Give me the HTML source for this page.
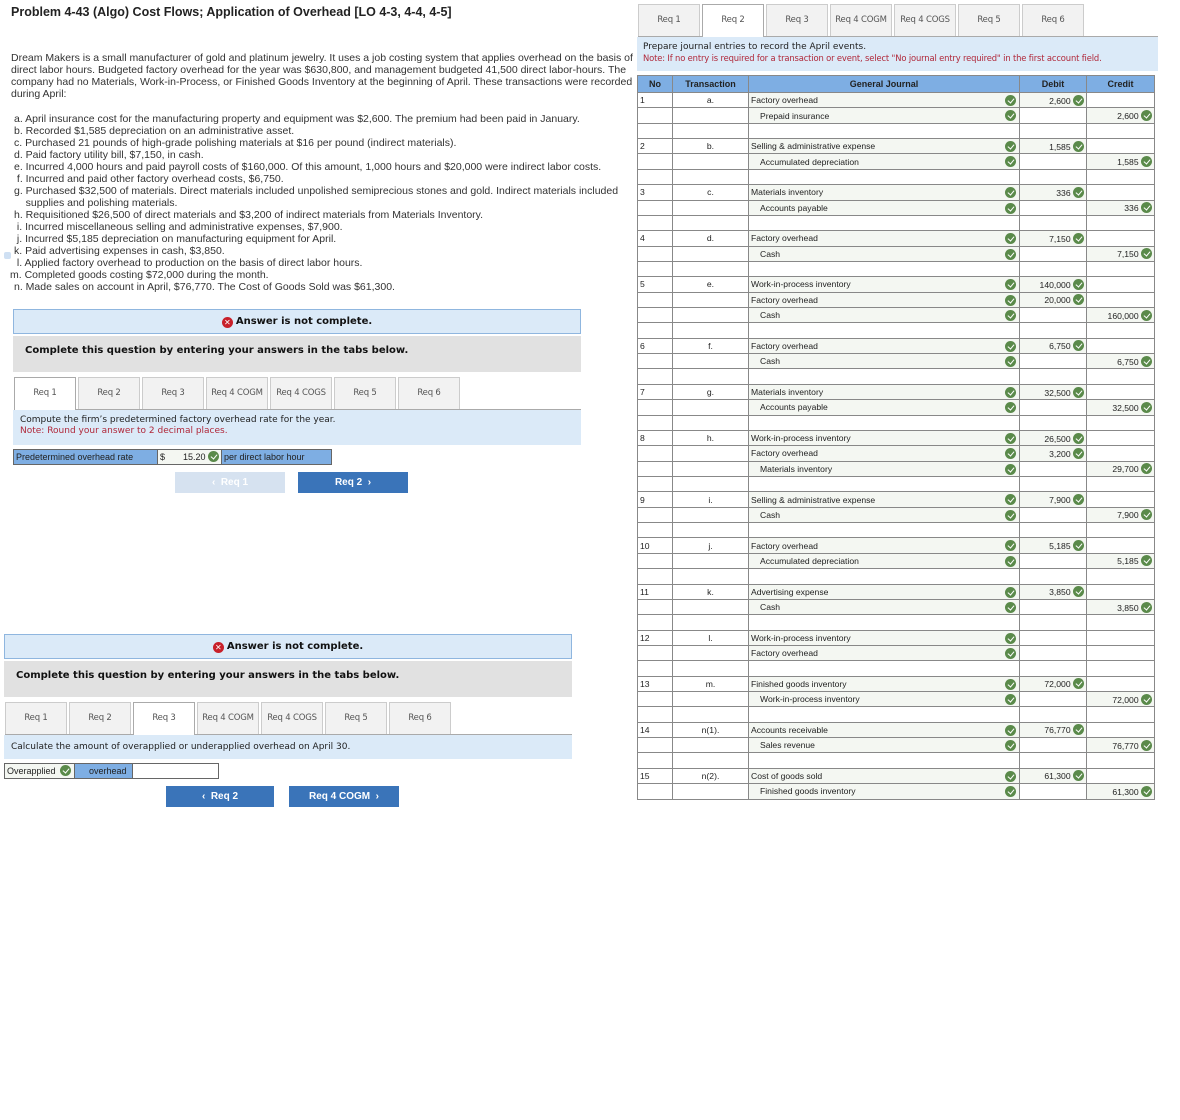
<!DOCTYPE html>
<html><head><meta charset="utf-8">
<style>
*{box-sizing:border-box;margin:0;padding:0}
body{width:1180px;height:1120px;background:#fff;position:relative;font-family:"Liberation Sans",Arial,sans-serif;color:#222;overflow:hidden}
.a{position:absolute}
.title{left:11px;top:5px;font-size:12.5px;font-weight:bold;color:#222}
.para{left:11px;top:52px;width:625px;font-size:10.5px;line-height:12px;color:#333}
.list{left:14px;top:113px;font-size:10.5px;line-height:12px;color:#333}
.list div{white-space:nowrap}
.ans{background:#dbeaf8;border:1px solid #8fb6df;font-size:10px;font-weight:bold;text-align:center;font-family:"DejaVu Sans",sans-serif;color:#111}
.x{display:inline-block;width:11px;height:11px;border-radius:50%;background:#c8202a;color:#fff;font-size:8px;line-height:11px;text-align:center;vertical-align:-1px;margin-right:3px}
.gray{background:#e1e1e1;font-family:"DejaVu Sans",sans-serif;font-size:10px;font-weight:bold;padding-left:12px;color:#111}
.tabs{display:flex;border-bottom:1px solid #aaa}
.tab{width:62px;margin-right:2px;height:32px;background:#f2f2f2;border:1px solid #ccc;border-bottom:none;font-family:"DejaVu Sans",sans-serif;font-size:8.5px;color:#555;text-align:center;line-height:30px;white-space:nowrap;letter-spacing:-.2px}
.tab.on{background:#fff;border-color:#aaa;height:33px;margin-bottom:-1px}
.inst{background:#dbeaf8;font-family:"DejaVu Sans",sans-serif;font-size:9px;color:#222;padding:5px 7px;line-height:11px}
.inst .n{color:#b0283a}
.btn{background:#3a74b9;color:#fff;font-size:10px;font-weight:bold;text-align:center;line-height:21px;height:21px}
.btn.dis{background:#d6e2f0}
.ck{display:inline-block;width:11px;height:11px;border-radius:50%;background:#5a8a4a;position:relative;vertical-align:-2px}
.ck:after{content:"";position:absolute;left:3.5px;top:2px;width:3px;height:5px;border:solid #fff;border-width:0 1.6px 1.6px 0;transform:rotate(40deg)}
table.j{position:absolute;left:637px;top:75px;border-collapse:collapse;font-size:8.6px;font-family:"Liberation Sans",Arial,sans-serif;color:#222}
table.j td,table.j th{border:1px solid #888;height:15.37px;padding:0 2px;white-space:nowrap}
table.j th{background:#7eaee3;height:17px;font-weight:bold;font-size:9px}
table.j td.t{background:#f4f7f2}
.gj{position:relative}
.gj .ck{position:absolute;right:3px;top:2px}
.ind{padding-left:11px!important}
.num{text-align:right}
</style></head><body>
<div class="a title">Problem 4-43 (Algo) Cost Flows; Application of Overhead [LO 4-3, 4-4, 4-5]</div>
<div class="a para">Dream Makers is a small manufacturer of gold and platinum jewelry. It uses a job costing system that applies overhead on the basis of direct labor hours. Budgeted factory overhead for the year was $630,800, and management budgeted 41,500 direct labor-hours. The company had no Materials, Work-in-Process, or Finished Goods Inventory at the beginning of April. These transactions were recorded during April:</div>
<div class="a list">
<div>a. April insurance cost for the manufacturing property and equipment was $2,600. The premium had been paid in January.</div>
<div>b. Recorded $1,585 depreciation on an administrative asset.</div>
<div>c. Purchased 21 pounds of high-grade polishing materials at $16 per pound (indirect materials).</div>
<div>d. Paid factory utility bill, $7,150, in cash.</div>
<div>e. Incurred 4,000 hours and paid payroll costs of $160,000. Of this amount, 1,000 hours and $20,000 were indirect labor costs.</div>
<div>&nbsp;f. Incurred and paid other factory overhead costs, $6,750.</div>
<div>g. Purchased $32,500 of materials. Direct materials included unpolished semiprecious stones and gold. Indirect materials included</div>
<div>&nbsp;&nbsp;&nbsp;&nbsp;supplies and polishing materials.</div>
<div>h. Requisitioned $26,500 of direct materials and $3,200 of indirect materials from Materials Inventory.</div>
<div>&nbsp;i. Incurred miscellaneous selling and administrative expenses, $7,900.</div>
<div>&nbsp;j. Incurred $5,185 depreciation on manufacturing equipment for April.</div>
<div>k. Paid advertising expenses in cash, $3,850.</div>
<div>&nbsp;l. Applied factory overhead to production on the basis of direct labor hours.</div>
<div style="margin-left:-4px">m. Completed goods costing $72,000 during the month.</div>
<div>n. Made sales on account in April, $76,770. The Cost of Goods Sold was $61,300.</div>
</div>
<div class="a" style="left:4px;top:252px;width:7px;height:7px;background:#cfe0f3;border-radius:2px"></div>

<div class="a ans" style="left:13px;top:309px;width:568px;height:25px;line-height:23px"><span class="x">✕</span>Answer is not complete.</div>
<div class="a gray" style="left:13px;top:336px;width:568px;height:36px;line-height:30px">Complete this question by entering your answers in the tabs below.</div>
<div class="a tabs" style="left:14px;top:377px;width:567px">
<div class="tab on">Req 1</div><div class="tab">Req 2</div><div class="tab">Req 3</div><div class="tab">Req 4 COGM</div><div class="tab">Req 4 COGS</div><div class="tab">Req 5</div><div class="tab">Req 6</div></div>
<div class="a inst" style="left:13px;top:410px;width:568px;height:35px">Compute the firm’s predetermined factory overhead rate for the year.<br><span class="n">Note: Round your answer to 2 decimal places.</span></div>
<div class="a" style="left:13px;top:449px;width:319px;height:16px;border:1px solid #666;display:flex;font-size:9px;line-height:14px">
<div style="width:144px;background:#7eaee3;padding-left:2px;border-right:1px solid #666">Predetermined overhead rate</div>
<div style="width:64px;background:#f4f7f2;border-right:1px solid #666;padding:0 2px;display:flex;justify-content:space-between"><span>$</span><span>15.20 <span class="ck"></span></span></div>
<div style="flex:1;background:#7eaee3;padding-left:2px">per direct labor hour</div></div>
<div class="a btn dis" style="left:175px;top:472px;width:110px">‹&nbsp; Req 1</div>
<div class="a btn" style="left:298px;top:472px;width:110px">Req 2 &nbsp;›</div>

<div class="a ans" style="left:4px;top:634px;width:568px;height:25px;line-height:23px"><span class="x">✕</span>Answer is not complete.</div>
<div class="a gray" style="left:4px;top:661px;width:568px;height:36px;line-height:30px">Complete this question by entering your answers in the tabs below.</div>
<div class="a tabs" style="left:5px;top:702px;width:567px">
<div class="tab">Req 1</div><div class="tab">Req 2</div><div class="tab on">Req 3</div><div class="tab">Req 4 COGM</div><div class="tab">Req 4 COGS</div><div class="tab">Req 5</div><div class="tab">Req 6</div></div>
<div class="a inst" style="left:4px;top:735px;width:568px;height:24px;line-height:14px">Calculate the amount of overapplied or underapplied overhead on April 30.</div>
<div class="a" style="left:4px;top:763px;width:215px;height:16px;border:1px solid #666;display:flex;font-size:9px;line-height:14px">
<div style="width:70px;background:#f4f7f2;padding-left:2px;border-right:1px solid #666;position:relative">Overapplied<span class="ck" style="position:absolute;right:3px;top:1px"></span></div>
<div style="width:58px;background:#7eaee3;padding-left:14px;border-right:1px solid #666">overhead</div>
<div style="flex:1;background:#fff"></div></div>
<div class="a btn" style="left:166px;top:786px;width:108px">‹&nbsp; Req 2</div>
<div class="a btn" style="left:289px;top:786px;width:110px">Req 4 COGM &nbsp;›</div>

<div class="a tabs" style="left:638px;top:4px;width:520px">
<div class="tab">Req 1</div><div class="tab on">Req 2</div><div class="tab">Req 3</div><div class="tab">Req 4 COGM</div><div class="tab">Req 4 COGS</div><div class="tab">Req 5</div><div class="tab">Req 6</div></div>
<div class="a inst" style="left:637px;top:37px;width:521px;height:34px;padding:5px 6px;white-space:nowrap">Prepare journal entries to record the April events.<br><span class="n" style="font-size:8.4px;letter-spacing:-.15px">Note: If no entry is required for a transaction or event, select "No journal entry required" in the first account field.</span></div>

<table class="j">
<colgroup><col style="width:35px"><col style="width:76px"><col style="width:271px"><col style="width:67px"><col style="width:68px"></colgroup>
<tr><th>No</th><th>Transaction</th><th>General Journal</th><th>Debit</th><th>Credit</th></tr>
<tr><td>1</td><td style="text-align:center">a.</td><td class="t gj">Factory overhead<span class="ck"></span></td><td class="t num">2,600 <span class="ck"></span></td><td></td></tr>
<tr><td></td><td></td><td class="t gj ind">Prepaid insurance<span class="ck"></span></td><td></td><td class="t num">2,600 <span class="ck"></span></td></tr>
<tr><td></td><td></td><td></td><td></td><td></td></tr>
<tr><td>2</td><td style="text-align:center">b.</td><td class="t gj">Selling &amp; administrative expense<span class="ck"></span></td><td class="t num">1,585 <span class="ck"></span></td><td></td></tr>
<tr><td></td><td></td><td class="t gj ind">Accumulated depreciation<span class="ck"></span></td><td></td><td class="t num">1,585 <span class="ck"></span></td></tr>
<tr><td></td><td></td><td></td><td></td><td></td></tr>
<tr><td>3</td><td style="text-align:center">c.</td><td class="t gj">Materials inventory<span class="ck"></span></td><td class="t num">336 <span class="ck"></span></td><td></td></tr>
<tr><td></td><td></td><td class="t gj ind">Accounts payable<span class="ck"></span></td><td></td><td class="t num">336 <span class="ck"></span></td></tr>
<tr><td></td><td></td><td></td><td></td><td></td></tr>
<tr><td>4</td><td style="text-align:center">d.</td><td class="t gj">Factory overhead<span class="ck"></span></td><td class="t num">7,150 <span class="ck"></span></td><td></td></tr>
<tr><td></td><td></td><td class="t gj ind">Cash<span class="ck"></span></td><td></td><td class="t num">7,150 <span class="ck"></span></td></tr>
<tr><td></td><td></td><td></td><td></td><td></td></tr>
<tr><td>5</td><td style="text-align:center">e.</td><td class="t gj">Work-in-process inventory<span class="ck"></span></td><td class="t num">140,000 <span class="ck"></span></td><td></td></tr>
<tr><td></td><td></td><td class="t gj">Factory overhead<span class="ck"></span></td><td class="t num">20,000 <span class="ck"></span></td><td></td></tr>
<tr><td></td><td></td><td class="t gj ind">Cash<span class="ck"></span></td><td></td><td class="t num">160,000 <span class="ck"></span></td></tr>
<tr><td></td><td></td><td></td><td></td><td></td></tr>
<tr><td>6</td><td style="text-align:center">f.</td><td class="t gj">Factory overhead<span class="ck"></span></td><td class="t num">6,750 <span class="ck"></span></td><td></td></tr>
<tr><td></td><td></td><td class="t gj ind">Cash<span class="ck"></span></td><td></td><td class="t num">6,750 <span class="ck"></span></td></tr>
<tr><td></td><td></td><td></td><td></td><td></td></tr>
<tr><td>7</td><td style="text-align:center">g.</td><td class="t gj">Materials inventory<span class="ck"></span></td><td class="t num">32,500 <span class="ck"></span></td><td></td></tr>
<tr><td></td><td></td><td class="t gj ind">Accounts payable<span class="ck"></span></td><td></td><td class="t num">32,500 <span class="ck"></span></td></tr>
<tr><td></td><td></td><td></td><td></td><td></td></tr>
<tr><td>8</td><td style="text-align:center">h.</td><td class="t gj">Work-in-process inventory<span class="ck"></span></td><td class="t num">26,500 <span class="ck"></span></td><td></td></tr>
<tr><td></td><td></td><td class="t gj">Factory overhead<span class="ck"></span></td><td class="t num">3,200 <span class="ck"></span></td><td></td></tr>
<tr><td></td><td></td><td class="t gj ind">Materials inventory<span class="ck"></span></td><td></td><td class="t num">29,700 <span class="ck"></span></td></tr>
<tr><td></td><td></td><td></td><td></td><td></td></tr>
<tr><td>9</td><td style="text-align:center">i.</td><td class="t gj">Selling &amp; administrative expense<span class="ck"></span></td><td class="t num">7,900 <span class="ck"></span></td><td></td></tr>
<tr><td></td><td></td><td class="t gj ind">Cash<span class="ck"></span></td><td></td><td class="t num">7,900 <span class="ck"></span></td></tr>
<tr><td></td><td></td><td></td><td></td><td></td></tr>
<tr><td>10</td><td style="text-align:center">j.</td><td class="t gj">Factory overhead<span class="ck"></span></td><td class="t num">5,185 <span class="ck"></span></td><td></td></tr>
<tr><td></td><td></td><td class="t gj ind">Accumulated depreciation<span class="ck"></span></td><td></td><td class="t num">5,185 <span class="ck"></span></td></tr>
<tr><td></td><td></td><td></td><td></td><td></td></tr>
<tr><td>11</td><td style="text-align:center">k.</td><td class="t gj">Advertising expense<span class="ck"></span></td><td class="t num">3,850 <span class="ck"></span></td><td></td></tr>
<tr><td></td><td></td><td class="t gj ind">Cash<span class="ck"></span></td><td></td><td class="t num">3,850 <span class="ck"></span></td></tr>
<tr><td></td><td></td><td></td><td></td><td></td></tr>
<tr><td>12</td><td style="text-align:center">l.</td><td class="t gj">Work-in-process inventory<span class="ck"></span></td><td></td><td></td></tr>
<tr><td></td><td></td><td class="t gj">Factory overhead<span class="ck"></span></td><td></td><td></td></tr>
<tr><td></td><td></td><td></td><td></td><td></td></tr>
<tr><td>13</td><td style="text-align:center">m.</td><td class="t gj">Finished goods inventory<span class="ck"></span></td><td class="t num">72,000 <span class="ck"></span></td><td></td></tr>
<tr><td></td><td></td><td class="t gj ind">Work-in-process inventory<span class="ck"></span></td><td></td><td class="t num">72,000 <span class="ck"></span></td></tr>
<tr><td></td><td></td><td></td><td></td><td></td></tr>
<tr><td>14</td><td style="text-align:center">n(1).</td><td class="t gj">Accounts receivable<span class="ck"></span></td><td class="t num">76,770 <span class="ck"></span></td><td></td></tr>
<tr><td></td><td></td><td class="t gj ind">Sales revenue<span class="ck"></span></td><td></td><td class="t num">76,770 <span class="ck"></span></td></tr>
<tr><td></td><td></td><td></td><td></td><td></td></tr>
<tr><td>15</td><td style="text-align:center">n(2).</td><td class="t gj">Cost of goods sold<span class="ck"></span></td><td class="t num">61,300 <span class="ck"></span></td><td></td></tr>
<tr><td></td><td></td><td class="t gj ind">Finished goods inventory<span class="ck"></span></td><td></td><td class="t num">61,300 <span class="ck"></span></td></tr>
</table>
</body></html>
